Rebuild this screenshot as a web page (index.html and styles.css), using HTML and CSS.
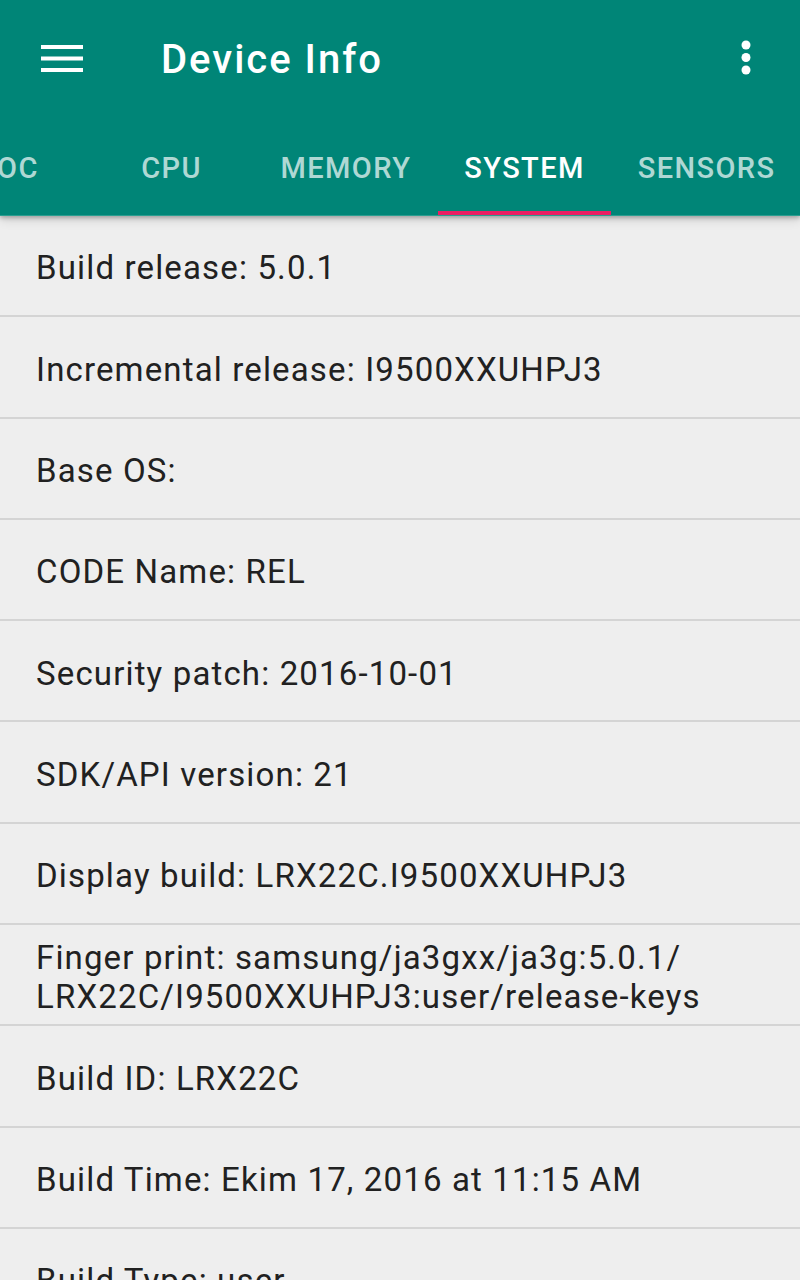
FILE: index.html
```html
<!DOCTYPE html>
<html>
<head>
<meta charset="utf-8">
<link rel="stylesheet" href="styles.css">
</head>
<body>
<header class="appbar">
  <div class="toolbar">
    <div class="menu-icon">
      <svg width="42" height="28" viewBox="0 0 42 28"><rect x="0" y="0" width="42" height="4" fill="#fff"/><rect x="0" y="11.5" width="42" height="4" fill="#fff"/><rect x="0" y="23" width="42" height="4" fill="#fff"/></svg>
    </div>
    <div class="title">Device Info</div>
    <div class="overflow">
      <svg width="12" height="36" viewBox="0 0 12 36"><circle cx="6" cy="5" r="4.5" fill="#fff"/><circle cx="6" cy="17.5" r="4.5" fill="#fff"/><circle cx="6" cy="30" r="4.5" fill="#fff"/></svg>
    </div>
  </div>
  <nav class="tabs">
    <div class="tab tab-soc">SOC</div>
    <div class="tab tab-cpu">CPU</div>
    <div class="tab">MEMORY</div>
    <div class="tab active">SYSTEM</div>
    <div class="tab">SENSORS</div>
  </nav>
</header>
<main class="list">
  <div class="row">Build release: 5.0.1</div>
  <div class="row">Incremental release: I9500XXUHPJ3</div>
  <div class="row">Base OS:</div>
  <div class="row">CODE Name: REL</div>
  <div class="row">Security patch: 2016-10-01</div>
  <div class="row">SDK/API version: 21</div>
  <div class="row">Display build: LRX22C.I9500XXUHPJ3</div>
  <div class="row">Finger print: samsung/ja3gxx/ja3g:5.0.1/<br>LRX22C/I9500XXUHPJ3:user/release-keys</div>
  <div class="row">Build ID: LRX22C</div>
  <div class="row">Build Time: Ekim 17, 2016 at 11:15 AM</div>
  <div class="row">Build Type: user</div>
</main>
</body>
</html>
```
FILE: styles.css
```css
html, body {
  margin: 0;
  padding: 0;
}
body {
  width: 800px;
  height: 1280px;
  overflow: hidden;
  background: #eeeeee;
  font-family: Roboto, "Noto Sans", sans-serif;
  color: #212121;
}
.appbar {
  position: relative;
  z-index: 2;
  background: #008577;
  box-shadow: 0 2px 4px rgba(0,0,0,0.25), 0 4px 10px rgba(0,0,0,0.12);
  border-bottom: 1px solid #2a9e90;
}
.toolbar {
  height: 112px;
  display: flex;
  align-items: center;
}
.menu-icon {
  width: 42px;
  height: 28px;
  margin-left: 41px;
  margin-top: 6px;
  display: flex;
}
.title {
  margin-left: 78px;
  color: #fff;
  font-size: 40px;
  font-weight: 500;
  margin-top: 6px;
  flex: 1;
  letter-spacing: 2px;
}
.overflow {
  width: 12px;
  height: 36px;
  margin-right: 48px;
  margin-top: 4px;
  display: flex;
}
.tabs {
  height: 103px;
  display: flex;
  margin-left: -72px;
  white-space: nowrap;
}
.tab {
  box-sizing: border-box;
  padding: 0 26.5px;
  display: flex;
  align-items: center;
  justify-content: center;
  color: rgba(255,255,255,0.7);
  font-size: 29px;
  font-weight: 500;
  letter-spacing: 1.4px;
  padding-top: 12px;
  border-bottom: 4px solid transparent;
}
.tab-soc {
  min-width: 161px;
}
.tab-cpu {
  min-width: 165px;
}
.tab.active {
  color: #fff;
  border-bottom-color: #e91e63;
}
.list {
  display: flex;
  flex-direction: column;
}
.row {
  box-sizing: border-box;
  height: 101.3px;
  flex: none;
  padding: 6px 36px 0;
  display: flex;
  flex-direction: column;
  justify-content: center;
  font-size: 33px;
  letter-spacing: 1.15px;
  line-height: 38.5px;
  border-bottom: 2px solid #d4d4d4;
}
```
